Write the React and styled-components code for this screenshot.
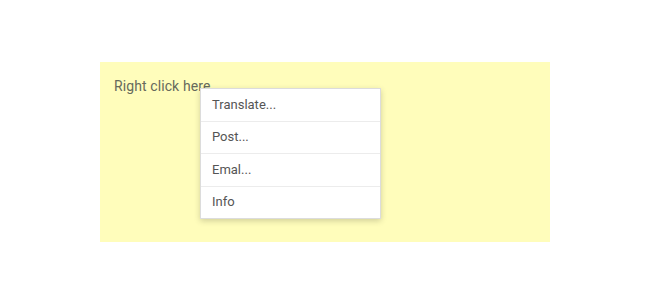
import styled, { createGlobalStyle } from "styled-components";

const GlobalStyle = createGlobalStyle`
  body {
    margin: 0;
    background: #fff;
    font-family: Roboto, "Liberation Sans", sans-serif;
  }
`;

const Page = styled.div`
  width: 650px;
  height: 306px;
  padding: 62px 0 0 100px;
  box-sizing: border-box;
`;

const Area = styled.div`
  position: relative;
  width: 450px;
  height: 180px;
  box-sizing: border-box;
  padding: 15px 14px;
  background: #fffdbb;
  color: #666a5c;
  font-size: 14px;
  letter-spacing: 0.1px;
  line-height: 18px;
`;

const Menu = styled.ul`
  position: absolute;
  left: 100px;
  top: 26px;
  width: 179px;
  margin: 0;
  padding: 0;
  list-style: none;
  background: #fff;
  border: 1px solid #dcdcdc;
  box-shadow: 0 2px 6px rgba(0, 0, 0, 0.18);
  letter-spacing: 0;
`;

const Item = styled.li`
  height: 31.5px;
  display: flex;
  align-items: center;
  padding: 0 11px;
  font-size: 13px;
  color: #555;
  border-top: ${(props) => (props.first ? "none" : "1px solid #ececec")};
`;

const items = ["Translate...", "Post...", "Emal...", "Info"];

const App = () => (
  <>
    <GlobalStyle />
    <Page>
      <Area>
        Right click here
        <Menu>
          {items.map((label, i) => (
            <Item key={label} first={i === 0}>
              {label}
            </Item>
          ))}
        </Menu>
      </Area>
    </Page>
  </>
);

export default App;
